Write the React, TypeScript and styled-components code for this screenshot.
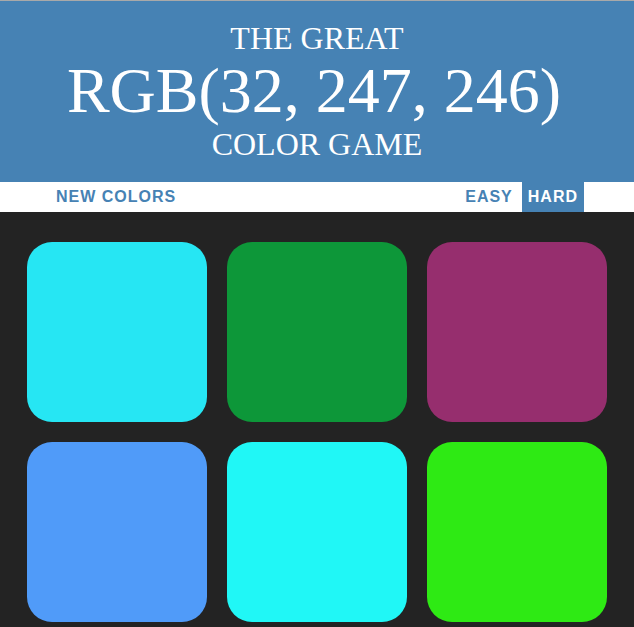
import React from "react";
import styled, { createGlobalStyle } from "styled-components";

const GlobalStyle = createGlobalStyle`
  html, body {
    margin: 0;
    padding: 0;
    background: #232323;
  }
  body {
    font-family: "Liberation Sans", Arial, sans-serif;
  }
`;

const Title = styled.h1`
  margin: 0;
  padding: 20px 0 20px;
  border-top: 1px solid #a9a9a9;
  background: #4682b4;
  color: #ffffff;
  font-family: "Liberation Serif", "Times New Roman", serif;
  font-weight: normal;
  font-size: 32px;
  line-height: 1.1;
  text-align: center;
  text-transform: uppercase;
`;

const TitleLine = styled.span`
  display: block;
`;

const ColorDisplay = styled.span`
  display: block;
  font-size: 200%;
  padding-right: 6px;
`;

const Stripe = styled.div`
  display: flex;
  justify-content: center;
  align-items: stretch;
  height: 30px;
  background: #ffffff;
`;

const StripeButton = styled.button<{ $selected?: boolean }>`
  border: none;
  margin: 0;
  padding: 0 6px;
  height: 100%;
  background: ${(p) => (p.$selected ? "#4682b4" : "transparent")};
  color: ${(p) => (p.$selected ? "#ffffff" : "#4682b4")};
  font-family: "Liberation Sans", Arial, sans-serif;
  font-size: 16px;
  font-weight: 700;
  letter-spacing: 1px;
  text-transform: uppercase;
  cursor: pointer;
  outline: none;
`;

const Message = styled.span`
  display: inline-block;
  width: 277px;
`;

const ModeGap = styled.span`
  display: inline-block;
  width: 3px;
`;

const Board = styled.div`
  max-width: 600px;
  margin: 20px auto 0;
  display: flex;
  flex-wrap: wrap;
`;

const Square = styled.div<{ $color: string }>`
  width: 180px;
  height: 180px;
  margin: 10px;
  border-radius: 25px;
  background: ${(p) => p.$color};
`;

const colors = [
  "rgb(38, 230, 243)",
  "rgb(13, 151, 57)",
  "rgb(150, 46, 110)",
  "rgb(80, 155, 249)",
  "rgb(32, 247, 246)",
  "rgb(46, 234, 20)",
];

export default function App() {
  return (
    <>
      <GlobalStyle />
      <Title>
        <TitleLine>The Great</TitleLine>
        <ColorDisplay>RGB(32, 247, 246)</ColorDisplay>
        <TitleLine>Color Game</TitleLine>
      </Title>
      <Stripe>
        <StripeButton>New Colors</StripeButton>
        <Message />
        <StripeButton>Easy</StripeButton>
        <ModeGap />
        <StripeButton $selected>Hard</StripeButton>
      </Stripe>
      <Board>
        {colors.map((c, i) => (
          <Square key={i} $color={c} />
        ))}
      </Board>
    </>
  );
}
